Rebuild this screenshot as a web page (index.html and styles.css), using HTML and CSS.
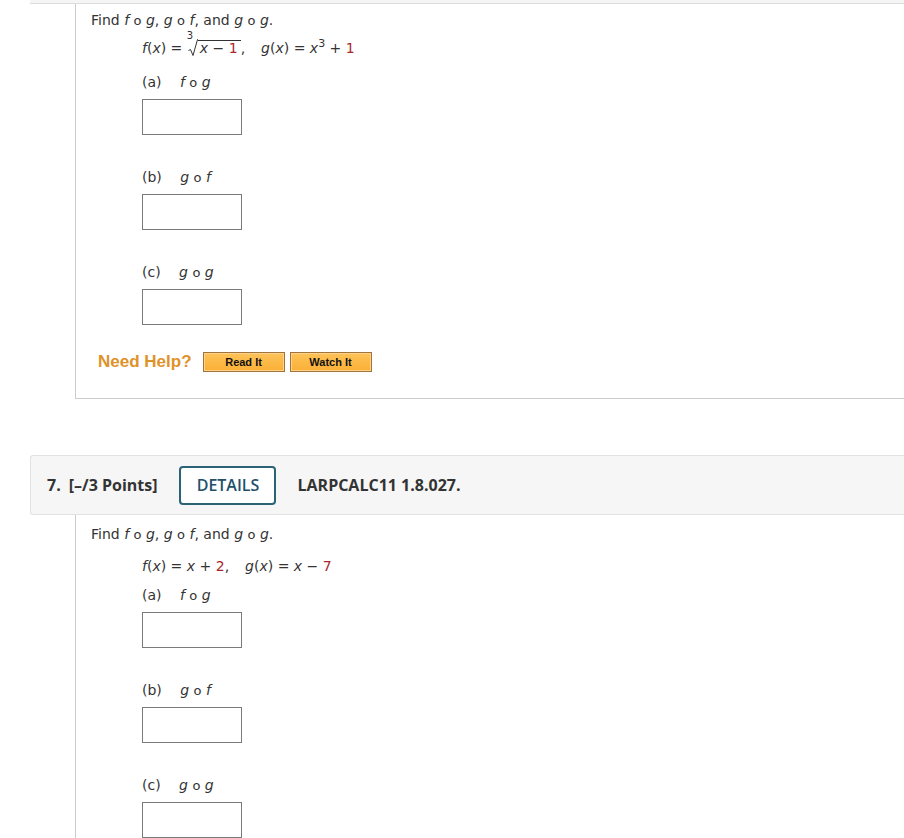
FILE: index.html
```html
<!DOCTYPE html>
<html>
<head>
<meta charset="utf-8">
<link rel="stylesheet" href="styles.css">
</head>
<body>
<div class="prev-header"></div>
<div class="question q1">
  <div class="prompt">Find <i>f</i> <span class="o">o</span> <i>g</i>, <i>g</i> <span class="o">o</span> <i>f</i>, and <i>g</i> <span class="o">o</span> <i>g</i>.</div>
  <div class="eq eq1"><i>f</i>(<i>x</i>) = <span class="root"><sup class="idx">3</sup><svg class="rad" width="10" height="18" viewBox="0 0 10 18"><path d="M0.5 11.5 L2.5 10.5 L5 16.5 L9.5 0.5 L10 0.5" fill="none" stroke="#333" stroke-width="1"/></svg><span class="under"><i>x</i> − <span class="red">1</span></span></span>,<span class="sep"></span><i>g</i>(<i>x</i>) = <i>x</i><sup class="pow">3</sup> + <span class="red">1</span></div>
  <div class="part first">
    <div class="label">(a) <span class="expr"><i>f</i> <span class="o">o</span> <i>g</i></span></div>
    <div class="box"></div>
  </div>
  <div class="part">
    <div class="label">(b) <span class="expr"><i>g</i> <span class="o">o</span> <i>f</i></span></div>
    <div class="box"></div>
  </div>
  <div class="part">
    <div class="label">(c) <span class="expr"><i>g</i> <span class="o">o</span> <i>g</i></span></div>
    <div class="box"></div>
  </div>
  <div class="help">
    <span class="help-title">Need Help?</span>
    <span class="hbtn">Read It</span>
    <span class="hbtn">Watch It</span>
  </div>
</div>

<div class="qheader">
  <span class="qnum">7.</span>
  <span class="qpts">[–/3 Points]</span>
  <span class="details">DETAILS</span>
  <span class="qcode">LARPCALC11 1.8.027.</span>
</div>
<div class="question q2">
  <div class="prompt">Find <i>f</i> <span class="o">o</span> <i>g</i>, <i>g</i> <span class="o">o</span> <i>f</i>, and <i>g</i> <span class="o">o</span> <i>g</i>.</div>
  <div class="eq eq2"><i>f</i>(<i>x</i>) = <i>x</i> + <span class="red">2</span>,<span class="sep"></span><i>g</i>(<i>x</i>) = <i>x</i> − <span class="red">7</span></div>
  <div class="part first2">
    <div class="label">(a) <span class="expr"><i>f</i> <span class="o">o</span> <i>g</i></span></div>
    <div class="box"></div>
  </div>
  <div class="part">
    <div class="label">(b) <span class="expr"><i>g</i> <span class="o">o</span> <i>f</i></span></div>
    <div class="box"></div>
  </div>
  <div class="part">
    <div class="label">(c) <span class="expr"><i>g</i> <span class="o">o</span> <i>g</i></span></div>
    <div class="box"></div>
  </div>
</div>
</body>
</html>
```
FILE: styles.css
```css
html, body {
  margin: 0;
  padding: 0;
  background: #ffffff;
}
body {
  font-family: "DejaVu Sans", sans-serif;
  font-size: 14px;
  color: #333333;
  overflow: hidden;
  height: 838px;
}
.prev-header {
  margin-left: 30px;
  height: 3px;
  background: #f5f5f5;
  border-bottom: 1px solid #dcdcdc;
}
.question {
  margin-left: 75px;
  border-left: 1px solid #cccccc;
  padding-left: 15px;
}
.q1 {
  padding-top: 8px;
  padding-bottom: 26px;
  border-bottom: 1px solid #cccccc;
}
.q2 {
  padding-top: 11px;
}
.prompt {
  line-height: 16px;
  height: 16px;
}
.o {
  font-size: 13px;
}
i {
  font-style: italic;
}
.eq {
  margin-left: 51px;
  line-height: 20px;
  height: 20px;
}
.eq1 { margin-top: 10px; }
.eq2 { margin-top: 14px; }
.sep {
  display: inline-block;
  width: 16px;
}
.red { color: #a8282a; }
.root {
  position: relative;
  display: inline-block;
  padding-left: 1px;
}
.idx {
  position: absolute;
  left: 0;
  top: -7px;
  font-size: 10px;
  line-height: 10px;
}
.rad {
  vertical-align: -4px;
}
.under {
  border-top: 1px solid #333;
  padding: 0 3px 0 2px;
  line-height: 15px;
  display: inline-block;
}
.pow {
  font-size: 11px;
  vertical-align: 6px;
  line-height: 0;
}
.part {
  margin-left: 51px;
  margin-top: 34px;
}
.part.first { margin-top: 16px; }
.part.first2 { margin-top: 11px; }
.label {
  line-height: 16px;
  height: 16px;
}
.expr {
  margin-left: 14px;
}
.box {
  margin-top: 9px;
  width: 98px;
  height: 34px;
  border: 1px solid #7a7a7a;
  background: #fff;
}
.help {
  margin-top: 27px;
  margin-left: 7px;
  display: flex;
  align-items: center;
  height: 20px;
}
.help-title {
  font-family: "Liberation Sans", Arial, sans-serif;
  font-weight: bold;
  font-size: 17px;
  color: #e0922a;
  margin-right: 11px;
}
.hbtn {
  display: inline-flex;
  align-items: center;
  justify-content: center;
  box-sizing: border-box;
  width: 82px;
  height: 20px;
  margin-right: 5px;
  border: 1px solid #a3743a;
  box-shadow: inset 0 0 0 1px #fdd28a;
  background: linear-gradient(#fdc35a, #fbb036);
  font-family: "Liberation Sans", Arial, sans-serif;
  font-weight: bold;
  font-size: 11px;
  color: #111;
}
.qheader {
  margin-top: 56px;
  margin-left: 30px;
  height: 58px;
  background: #f6f6f6;
  border: 1px solid #e2e2e2;
  border-right: none;
  border-radius: 3px 0 0 3px;
  display: flex;
  align-items: center;
  padding-left: 16px;
  font-family: "Open Sans", sans-serif;
  font-size: 16px;
  color: #333;
}
.qnum, .qpts {
  font-weight: bold;
}
.qpts {
  margin-left: 8px;
}
.details {
  margin-left: 22px;
  box-sizing: border-box;
  height: 39px;
  width: 97px;
  border: 2px solid #2b6275;
  border-radius: 4px;
  background: #fff;
  display: inline-flex;
  align-items: center;
  justify-content: center;
  color: #22506a;
  font-weight: 600;
}
.qcode {
  margin-left: 21px;
  font-weight: bold;
}
```
